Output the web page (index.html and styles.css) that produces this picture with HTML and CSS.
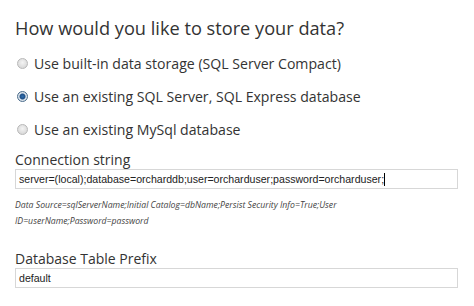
FILE: index.html
```html
<!DOCTYPE html>
<html>
<head>
    <title>Setup - Data Storage</title>
    <link rel="stylesheet" href="styles.css">
</head>
<body>
    <div class="container">
        <h2 class="title">How would you like to store your data?</h2>

        <div class="options">
            <label class="option">
                <span class="radio"></span>
                Use built-in data storage (SQL Server Compact)
            </label>
            <label class="option">
                <span class="radio checked"></span>
                Use an existing SQL Server, SQL Express database
            </label>
            <label class="option">
                <span class="radio"></span>
                Use an existing MySql database
            </label>
        </div>

        <div class="field">
            <label class="field-label" for="connectionString">Connection string</label>
            <div class="textbox" id="connectionString">server=(local);database=orcharddb;user=orcharduser;password=orcharduser;<span class="caret"></span></div>
            <p class="hint">Data Source=sqlServerName;Initial Catalog=dbName;Persist Security Info=True;User ID=userName;Password=password</p>
        </div>

        <div class="field">
            <label class="field-label" for="tablePrefix">Database Table Prefix</label>
            <div class="textbox" id="tablePrefix">default</div>
        </div>
    </div>
</body>
</html>
```

FILE: styles.css
```css
body {
    margin: 0;
    padding: 0;
    background: #fff;
    color: #333;
    font-family: "Open Sans", sans-serif;
}

.container {
    width: 443px;
    padding: 16px 0 0 15px;
}

.title {
    font-size: 18.2px;
    font-weight: normal;
    margin: 0 0 12px 0;
    line-height: 24px;
}

.options {
    display: flex;
    flex-direction: column;
    gap: 10px;
    margin-bottom: 10px;
}

.option {
    display: flex;
    align-items: center;
    gap: 6px;
    font-size: 14.1px;
    line-height: 23px;
    padding-left: 2px;
}

.radio {
    width: 9px;
    height: 9px;
    border-radius: 50%;
    border: 1px solid #b8b8b8;
    background: radial-gradient(circle at 50% 40%, #f4f4f4, #d0d0d0);
    box-sizing: content-box;
}

.radio.checked {
    border-color: #4b6d8c;
    background: radial-gradient(circle, #2f6fb0 0, #1f4f86 2.5px, #dfe7ef 3.5px, #c4ccd4 100%);
}

.field-label {
    display: block;
    font-size: 14px;
    line-height: 18px;
}

.textbox {
    height: 18px;
    border: 1px solid #d7d7d7;
    padding: 0 3px;
    font-family: "Liberation Sans", Arial, sans-serif;
    font-size: 10.6px;
    line-height: 18px;
    color: #222;
    white-space: nowrap;
}

.caret {
    display: inline-block;
    width: 1px;
    height: 13px;
    background: #000;
    vertical-align: -3px;
}

.hint {
    margin: 8px 0 21px 0;
    font-size: 8.7px;
    font-style: italic;
    line-height: 16px;
    color: #444;
}
```
